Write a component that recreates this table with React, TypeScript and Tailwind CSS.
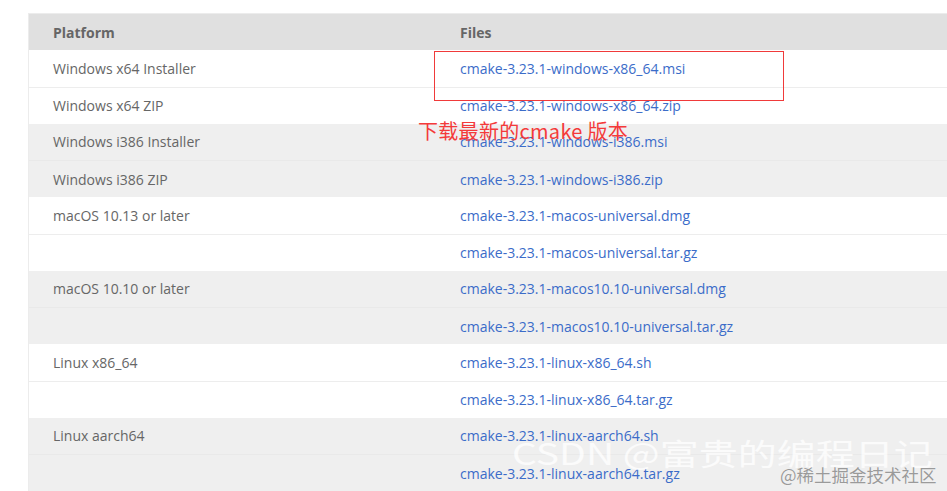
const groups: { rows: [string, string][]; gray: boolean }[] = [
  {
    gray: false,
    rows: [
      ['Windows x64 Installer', 'cmake-3.23.1-windows-x86_64.msi'],
      ['Windows x64 ZIP', 'cmake-3.23.1-windows-x86_64.zip'],
    ],
  },
  {
    gray: true,
    rows: [
      ['Windows i386 Installer', 'cmake-3.23.1-windows-i386.msi'],
      ['Windows i386 ZIP', 'cmake-3.23.1-windows-i386.zip'],
    ],
  },
  {
    gray: false,
    rows: [
      ['macOS 10.13 or later', 'cmake-3.23.1-macos-universal.dmg'],
      ['', 'cmake-3.23.1-macos-universal.tar.gz'],
    ],
  },
  {
    gray: true,
    rows: [
      ['macOS 10.10 or later', 'cmake-3.23.1-macos10.10-universal.dmg'],
      ['', 'cmake-3.23.1-macos10.10-universal.tar.gz'],
    ],
  },
  {
    gray: false,
    rows: [
      ['Linux x86_64', 'cmake-3.23.1-linux-x86_64.sh'],
      ['', 'cmake-3.23.1-linux-x86_64.tar.gz'],
    ],
  },
  {
    gray: true,
    rows: [
      ['Linux aarch64', 'cmake-3.23.1-linux-aarch64.sh'],
      ['', 'cmake-3.23.1-linux-aarch64.tar.gz'],
    ],
  },
]

export default function App() {
  return (
    <div className="relative h-[491px] w-[947px] overflow-hidden bg-white pt-[13px] pl-[28px] font-['Open_Sans',sans-serif] text-[14px]">
      <div className="border-t border-l border-[#ececec]">
        {/* header */}
        <div className="flex h-[36px] items-center bg-[#e0e0e0] font-bold text-[#666]">
          <div className="w-[407px] pl-[24px]">Platform</div>
          <div className="pl-[24px]">Files</div>
        </div>

        {groups.map((g, gi) => (
          <div key={gi} className={g.gray ? 'bg-[#efefef]' : 'bg-white'}>
            {g.rows.map(([platform, file], ri) => (
              <div
                key={ri}
                className={
                  'flex h-[36.75px] items-center ' +
                  (ri > 0 ? (g.gray ? 'border-t border-[#e9e9e9]' : 'border-t border-[#ededed]') : '')
                }
              >
                <div className="w-[407px] pl-[24px] text-[#666]">{platform}</div>
                <a className="pl-[24px] text-[#3b6cc9]">{file}</a>
              </div>
            ))}
          </div>
        ))}
      </div>

      {/* annotation */}
      <div className="absolute top-[51px] left-[434px] h-[50px] w-[350px] border border-[#f03a3a]" />
      <div className="absolute top-[118px] left-[418px] font-['Noto_Sans_CJK_SC',sans-serif] text-[20px] leading-[26px] tracking-[0.3px] text-[#f43a3a]">
        下载最新的cmake 版本
      </div>

      {/* watermarks */}
      <div className="absolute top-[432px] left-[512px] origin-left scale-x-[1.3] font-['Noto_Sans_CJK_SC',sans-serif] text-[30px] leading-[40px] whitespace-nowrap text-white/75">
        CSDN @富贵的编程日记
      </div>
      <div className="absolute top-[463px] left-[780px] font-['Noto_Sans_CJK_SC',sans-serif] text-[17.5px] leading-[24px] whitespace-nowrap text-[#9a9a9a] [text-shadow:0_0_1px_#fff]">
        @稀土掘金技术社区
      </div>
    </div>
  )
}
